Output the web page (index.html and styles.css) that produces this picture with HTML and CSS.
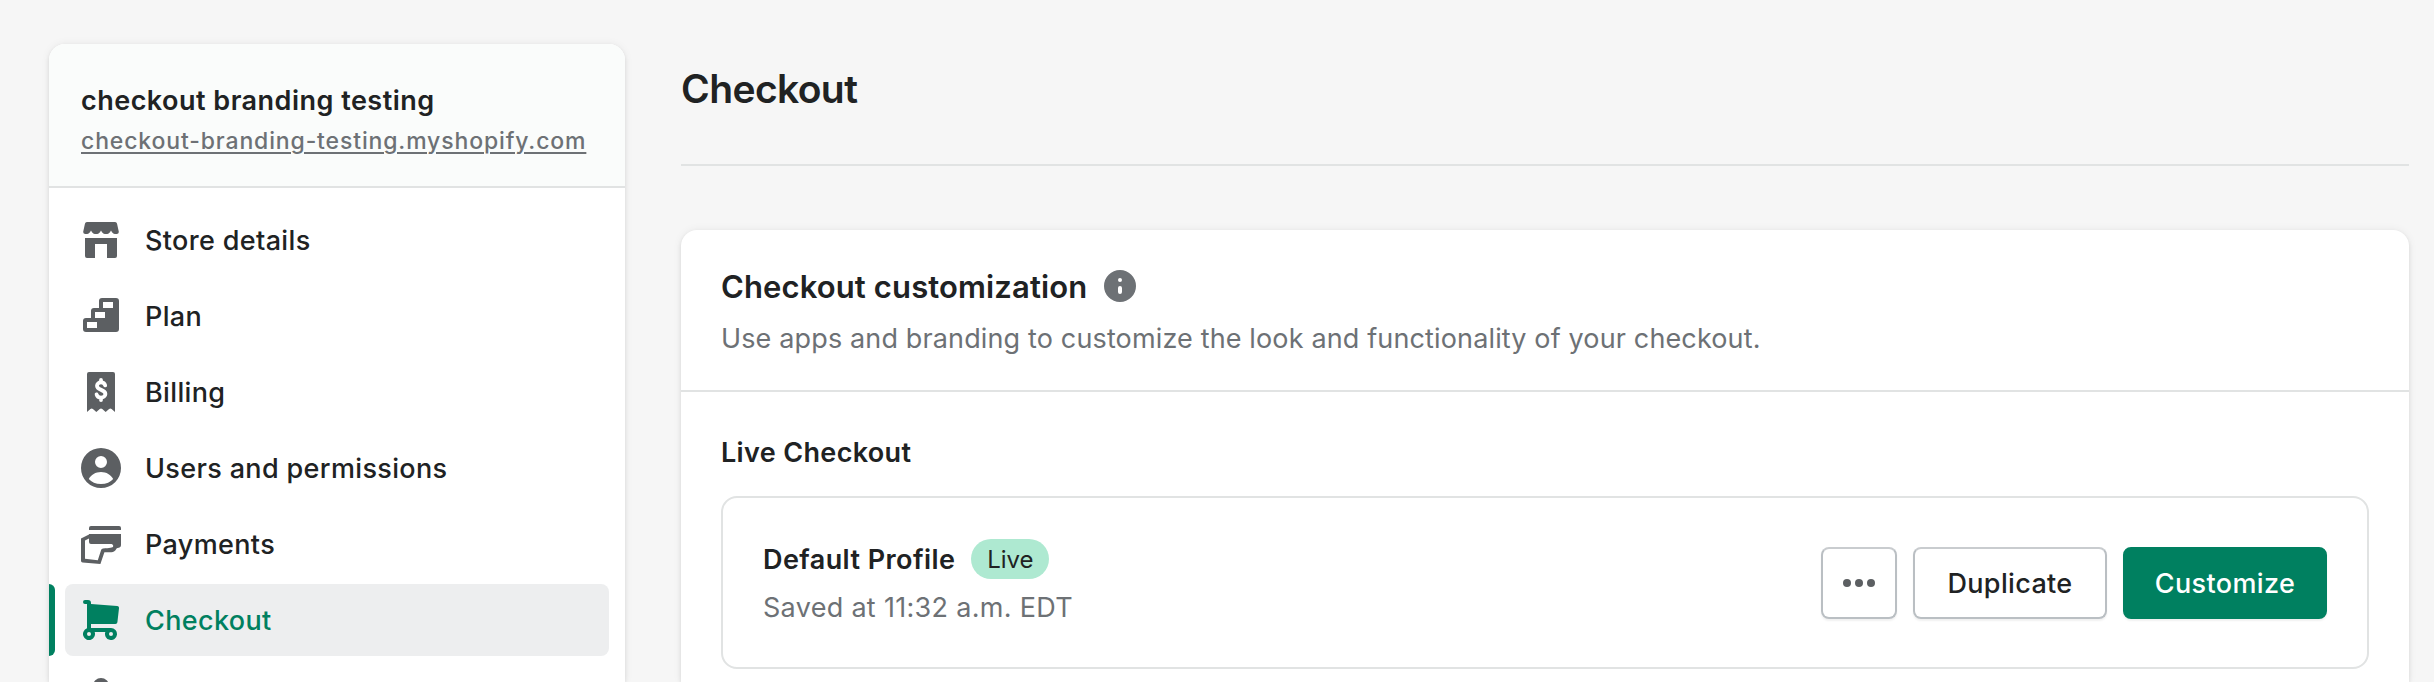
FILE: index.html
```html
<!DOCTYPE html>
<html lang="en">
<head>
  <meta charset="UTF-8">
  <title>Checkout settings</title>
  <link rel="stylesheet" href="styles.css">
</head>
<body>

  <div class="page">
    <aside class="sidebar">
      <div class="store">
        <div class="store-name">checkout branding testing</div>
        <a class="store-link" href="#">checkout-branding-testing.myshopify.com</a>
      </div>

      <nav class="nav">
        <a class="nav-item" href="#">
          <svg class="icon" viewBox="0 0 20 20">
            <path d="M3 1h14a1 1 0 0 1 1 .8l.9 4.1A1 1 0 0 1 18 7h-1c-.9 0-1.4-.5-2-1.7C14.4 6.5 13.9 7 13 7h-1c-.9 0-1.4-.5-2-1.7C9.4 6.5 8.9 7 8 7H7c-.9 0-1.4-.5-2-1.7C4.4 6.5 3.9 7 3 7H2a1 1 0 0 1-.9-1.1L2 1.800A1 1 0 0 1 3 1z"/>
            <path d="M2 9h16v9a1 1 0 0 1-1 1h-4v-7H7v7H3a1 1 0 0 1-1-1z"/>
          </svg>
          <span>Store details</span>
        </a>
        <a class="nav-item" href="#">
          <svg class="icon" viewBox="0 0 20 20">
            <path fill-rule="evenodd" d="M10.5 1h7A1.5 1.5 0 0 1 19 2.5v14a1.5 1.5 0 0 1-1.5 1.5h-15A1.5 1.5 0 0 1 1 16.5v-4A1.5 1.5 0 0 1 2.5 11H5V7.5A1.5 1.5 0 0 1 6.5 6H9V2.5A1.5 1.5 0 0 1 10.5 1zM11 3v3h5V3zM7 8v3h5V8zM3 13v3h5v-3z"/>
          </svg>
          <span>Plan</span>
        </a>
        <a class="nav-item" href="#">
          <svg class="icon" viewBox="0 0 20 20">
            <path d="M4 0h12a1 1 0 0 1 1 1v19l-1.7-1.5a.9.9 0 0 0-1.25 0L12.33 20l-1.7-1.5a.9.9 0 0 0-1.26 0L7.67 20l-1.72-1.5a.9.9 0 0 0-1.25 0L3 20V1a1 1 0 0 1 1-1z"/>
            <path class="cut" d="M12.1 6.7C11.8 5.6 11 5.2 10 5.2c-1.2 0-2 .7-2 1.7C8 9.4 12.2 8.5 12.2 11c0 1.1-1 1.8-2.2 1.8-1.1 0-1.9-.5-2.2-1.6M10 4v1.2M10 12.8V14"/>
          </svg>
          <span>Billing</span>
        </a>
        <a class="nav-item" href="#">
          <svg class="icon" viewBox="0 0 20 20">
            <path fill-rule="evenodd" d="M10 0a10 10 0 1 1 0 20 10 10 0 0 1 0-20zM10 4a3 3 0 1 0 0 6 3 3 0 0 0 0-6zM10 12c-2.7 0-5 1.4-6.1 3.5C5.2 17 7.4 18 10 18s4.8-1 6.1-2.5C15 13.4 12.7 12 10 12z"/>
          </svg>
          <span>Users and permissions</span>
        </a>
        <a class="nav-item" href="#">
          <svg class="icon" viewBox="0 0 20 20">
            <path d="M5 1h14a1 1 0 0 1 1 1v1H4V2a1 1 0 0 1 1-1z"/>
            <path fill-rule="evenodd" d="M4 5h16v5.5c0 .9-.6 1.4-1.2 1.4-.5.2-.7-.1-1.1.5-.5 1.1-1.4 1.7-2.5 1.7h-3.5L9.7 20 .8 19.2A.9.9 0 0 1 0 18.3V7.2L4 5.3zM4 7.3l-2 .9v9.2l6.4.7 1.7-5.2a1 1 0 0 1 .9-.7c3.2-.1 5.1-.2 5.1-1.2 0-.7-.6-1-1.3-1H5a1 1 0 0 1-1-1z"/>
          </svg>
          <span>Payments</span>
        </a>
        <a class="nav-item active" href="#">
          <svg class="icon" viewBox="0 0 20 20">
            <path fill-rule="evenodd" d="M2 0h1.5A1.5 1.5 0 0 1 5 1.5V2l13.1 1a1 1 0 0 1 .9 1.1l-.8 7a1 1 0 0 1-1 .9H5v2h10a3 3 0 1 1-2.83 2H6.83A3 3 0 1 1 3 14.17V2H2a1 1 0 0 1 0-2zM4 16a1 1 0 1 0 0 2 1 1 0 0 0 0-2zM15 16a1 1 0 1 0 0 2 1 1 0 0 0 0-2z"/>
          </svg>
          <span>Checkout</span>
        </a>
        <a class="nav-item" href="#">
          <svg class="icon" viewBox="0 0 20 20">
            <circle cx="10" cy="5" r="4"/>
          </svg>
        </a>
      </nav>
    </aside>

    <main class="main">
      <h1 class="title">Checkout</h1>

      <section class="card">
        <div class="card-header">
          <div class="card-title">
            <h2>Checkout customization</h2>
            <svg class="info" viewBox="0 0 16 16">
              <path fill-rule="evenodd" d="M8 0a8 8 0 1 1 0 16A8 8 0 0 1 8 0zM8 4a1 1 0 1 0 0 2 1 1 0 0 0 0-2zM8 8a1 1 0 0 0-1 1v2a1 1 0 0 0 2 0V9a1 1 0 0 0-1-1z"/>
            </svg>
          </div>
          <p class="desc">Use apps and branding to customize the look and functionality of your checkout.</p>
        </div>

        <div class="card-body">
          <h3>Live Checkout</h3>
          <div class="profile">
            <div class="profile-info">
              <div class="profile-name">
                <span class="name">Default Profile</span>
                <span class="badge">Live</span>
              </div>
              <div class="saved">Saved at 11:32 a.m. EDT</div>
            </div>
            <div class="actions">
              <button class="btn btn-more" aria-label="More actions">
                <svg class="icon" viewBox="0 0 20 20">
                  <circle cx="4" cy="10" r="2"/>
                  <circle cx="10" cy="10" r="2"/>
                  <circle cx="16" cy="10" r="2"/>
                </svg>
              </button>
              <button class="btn btn-duplicate">Duplicate</button>
              <button class="btn btn-primary">Customize</button>
            </div>
          </div>
        </div>
      </section>
    </main>
  </div>

</body>
</html>
```

FILE: styles.css
```css
* { box-sizing: border-box; margin: 0; padding: 0; }
body {
  font-family: Inter, "Liberation Sans", sans-serif;
  font-size: 27px;
  line-height: 40px;
  letter-spacing: 0.35px;
  color: #202223;
  background: #f6f6f6;
}
a { color: inherit; text-decoration: none; }
svg { display: block; flex: none; }

.page {
  display: flex;
  gap: 56px;
  height: 682px;
  padding: 44px 25px 0 49px;
  overflow: hidden;
}

/* Sidebar */
.sidebar {
  width: 576px;
  flex: none;
  background: #fff;
  border-radius: 16px 16px 0 0;
  box-shadow: 0 0 10px rgba(23, 24, 24, 0.06), 0 2px 4px rgba(0, 0, 0, 0.1);
}
.store {
  height: 144px;
  padding: 37px 32px 0;
  background: #fafcfb;
  border-bottom: 2px solid #e1e3e3;
  border-radius: 16px 16px 0 0;
}
.store-name {
  font-weight: 600;
  letter-spacing: 0.48px;
  white-space: nowrap;
}
.store-link {
  display: block;
  font-size: 23px;
  font-weight: 500;
  letter-spacing: 0.86px;
  color: #6d7175;
  text-decoration: underline;
  text-decoration-thickness: 2px;
  text-underline-offset: 3px;
  white-space: nowrap;
}

/* Navigation */
.nav {
  display: flex;
  flex-direction: column;
  gap: 4px;
  padding: 16px 16px 0;
}
.nav-item {
  position: relative;
  display: flex;
  align-items: center;
  gap: 24px;
  height: 72px;
  padding-left: 16px;
  border-radius: 8px;
  font-weight: 500;
}
.nav-item span { padding-top: 2px; }
.nav-item.active {
  background: #edeeef;
  color: #008060;
}
.nav-item.active::before {
  content: '';
  position: absolute;
  left: -16px;
  top: 0;
  width: 6px;
  height: 72px;
  background: #008060;
  border-radius: 0 6px 6px 0;
}
.icon {
  width: 40px;
  height: 40px;
  fill: #5c5f62;
}
.active .icon { fill: #008060; }
.cut {
  fill: none;
  stroke: #fff;
  stroke-width: 1.9;
  stroke-linecap: round;
}

/* Main column */
.main {
  flex: 1;
  display: flex;
  flex-direction: column;
}
.title {
  height: 122px;
  padding-top: 20px;
  font-size: 39px;
  font-weight: 600;
  line-height: 50px;
  letter-spacing: -0.6px;
  border-bottom: 2px solid #e1e3e3;
}
.card {
  flex: 1;
  margin-top: 64px;
  background: #fff;
  border-radius: 16px 16px 0 0;
  box-shadow: 0 0 10px rgba(23, 24, 24, 0.06), 0 2px 4px rgba(0, 0, 0, 0.1);
}
.card-header {
  height: 162px;
  padding: 36px 40px 0;
  border-bottom: 2px solid #e1e3e3;
}
.card-title {
  display: flex;
  align-items: center;
  gap: 17px;
}
.card-title h2 {
  padding-top: 1px;
  font-size: 31px;
  font-weight: 600;
  line-height: 39px;
  letter-spacing: 0.12px;
}
.info {
  width: 32px;
  height: 32px;
  fill: #6d7175;
}
.desc {
  margin-top: 13px;
  letter-spacing: 0.14px;
  color: #6d7175;
}
.card-body { padding: 41px 40px 0; }
.card-body h3 {
  font-size: 27px;
  font-weight: 600;
}
.profile {
  display: flex;
  justify-content: space-between;
  height: 173px;
  margin-top: 23px;
  padding: 41px 40px 0;
  border: 2px solid #e1e3e3;
  border-radius: 16px;
}
.profile-name {
  display: flex;
  align-items: center;
  gap: 16px;
}
.name {
  padding-top: 2px;
  font-weight: 600;
  line-height: 38px;
  letter-spacing: 0.42px;
}
.badge {
  width: 78px;
  height: 40px;
  background: #aee9d1;
  border-radius: 20px;
  font-size: 24px;
  line-height: 41px;
  letter-spacing: 0;
  text-align: center;
}
.saved {
  margin-top: 9px;
  letter-spacing: 0.3px;
  color: #6d7175;
}

/* Buttons */
.actions {
  display: flex;
  gap: 16px;
  margin-top: 8px;
}
.btn {
  display: flex;
  align-items: center;
  justify-content: center;
  height: 72px;
  background: #fff;
  border: 2px solid #babfc3;
  border-top-color: #c9cccf;
  border-radius: 8px;
  box-shadow: 0 2px 2px rgba(0, 0, 0, 0.06);
  font: 500 27px/40px Inter, "Liberation Sans", sans-serif;
  letter-spacing: 0.35px;
  color: #202223;
}
.btn-more { width: 76px; }
.btn-duplicate {
  width: 194px;
  padding-top: 2px;
}
.btn-primary {
  width: 204px;
  padding-top: 2px;
  background: #008060;
  border-color: #008060;
  color: #fff;
}
```
